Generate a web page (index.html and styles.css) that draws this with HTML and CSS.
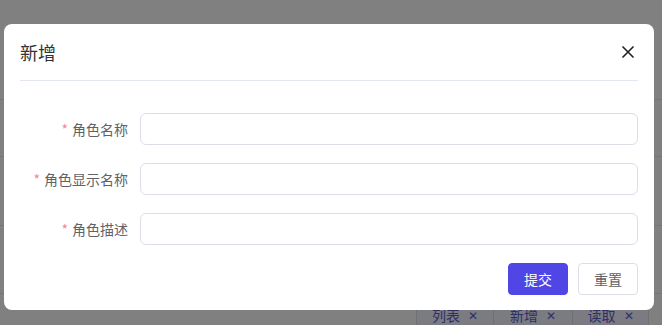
FILE: index.html
```html
<!DOCTYPE html>
<html lang="zh">
<head>
<meta charset="utf-8">
<title>新增</title>
<link rel="stylesheet" href="styles.css">
</head>
<body>
<div class="page">
  <div class="rows">
    <div class="row r1"></div>
    <div class="row r2"></div>
    <div class="row r3"></div>
    <div class="row r4"></div>
  </div>
  <div class="tabs">
    <div class="tab">列表 <span class="x">✕</span></div>
    <div class="tab">新增 <span class="x">✕</span></div>
    <div class="tab">读取 <span class="x">✕</span></div>
  </div>
</div>

<div class="modal">
  <div class="modal-header">
    <span class="modal-title">新增</span>
    <button class="close" aria-label="关闭">
      <svg width="14" height="14" viewBox="0 0 14 14"><path d="M1.5 1.5 L12.5 12.5 M12.5 1.5 L1.5 12.5" stroke="#222" stroke-width="1.6" fill="none"/></svg>
    </button>
  </div>
  <div class="modal-body">
    <div class="form-row">
      <label class="label"><span class="star">*</span>角色名称</label>
      <input class="input" type="text">
    </div>
    <div class="form-row">
      <label class="label"><span class="star">*</span>角色显示名称</label>
      <input class="input" type="text">
    </div>
    <div class="form-row">
      <label class="label"><span class="star">*</span>角色描述</label>
      <input class="input" type="text">
    </div>
    <div class="actions">
      <button class="btn btn-primary">提交</button>
      <button class="btn btn-default">重置</button>
    </div>
  </div>
</div>
</body>
</html>
```

FILE: styles.css
```css
html, body {
  margin: 0;
  padding: 0;
}
body {
  width: 662px;
  height: 325px;
  overflow: hidden;
  background: #808080;
  font-family: "Noto Sans CJK SC", "Noto Sans", sans-serif;
  position: relative;
}
.page {
  height: 325px;
  display: flex;
  flex-direction: column;
}
.rows {
  flex: 1;
  display: flex;
  flex-direction: column;
}
.row {
  border-bottom: 1px solid #747474;
}
.r1 { height: 99px; }
.r2 { height: 56px; }
.r3 { height: 68px; }
.r4 { height: 67px; }
.tabs {
  height: 34px;
  display: flex;
  padding-left: 416px;
  align-items: stretch;
}
.tab {
  box-sizing: border-box;
  width: 77px;
  border-left: 1px solid #6f6f76;
  background: #7b7b82;
  color: #2f2f66;
  font-size: 14px;
  line-height: 16px;
  display: flex;
  align-items: center;
  justify-content: center;
  gap: 8px;
  padding-top: 10px;
}
.tab:nth-child(2) { width: 79px; }
.tab:last-child { border-right: 1px solid #6f6f76; }
.tab .x { font-size: 12px; }

.modal {
  position: absolute;
  left: 4px;
  top: 24px;
  width: 650px;
  height: 286px;
  box-sizing: border-box;
  background: #fff;
  border-radius: 8px;
}
.modal-header {
  margin: 0 16px;
  height: 57px;
  box-sizing: border-box;
  border-bottom: 1px solid #e3e8f0;
  display: flex;
  align-items: center;
  justify-content: space-between;
}
.modal-title {
  font-size: 18px;
  color: #333;
  line-height: 24px;
}
.close {
  border: 0;
  background: none;
  padding: 0;
  width: 14px;
  height: 14px;
  margin-right: 3px;
  display: flex;
}
.modal-body {
  padding: 32px 16px 0;
  display: flex;
  flex-direction: column;
  gap: 18px;
}
.form-row {
  display: flex;
  align-items: center;
  gap: 12px;
}
.label {
  width: 108px;
  text-align: right;
  font-size: 14px;
  color: #606266;
  white-space: nowrap;
}
.star {
  color: #f0889a;
  margin-right: 4px;
}
.input {
  flex: 1;
  height: 32px;
  box-sizing: border-box;
  border: 1px solid #dddde8;
  border-radius: 6px;
  outline: none;
  padding: 0 11px;
  background: #fff;
}
.actions {
  display: flex;
  justify-content: flex-end;
  gap: 10px;
}
.btn {
  width: 60px;
  height: 32px;
  box-sizing: border-box;
  border-radius: 4px;
  font-family: "Noto Sans CJK SC", "Noto Sans", sans-serif;
  font-size: 14px;
  padding: 0;
  cursor: pointer;
}
.btn-primary {
  background: #4f46e5;
  border: 1px solid #4f46e5;
  color: #fff;
}
.btn-default {
  background: #fff;
  border: 1px solid #dcdfe6;
  color: #606266;
}
```
